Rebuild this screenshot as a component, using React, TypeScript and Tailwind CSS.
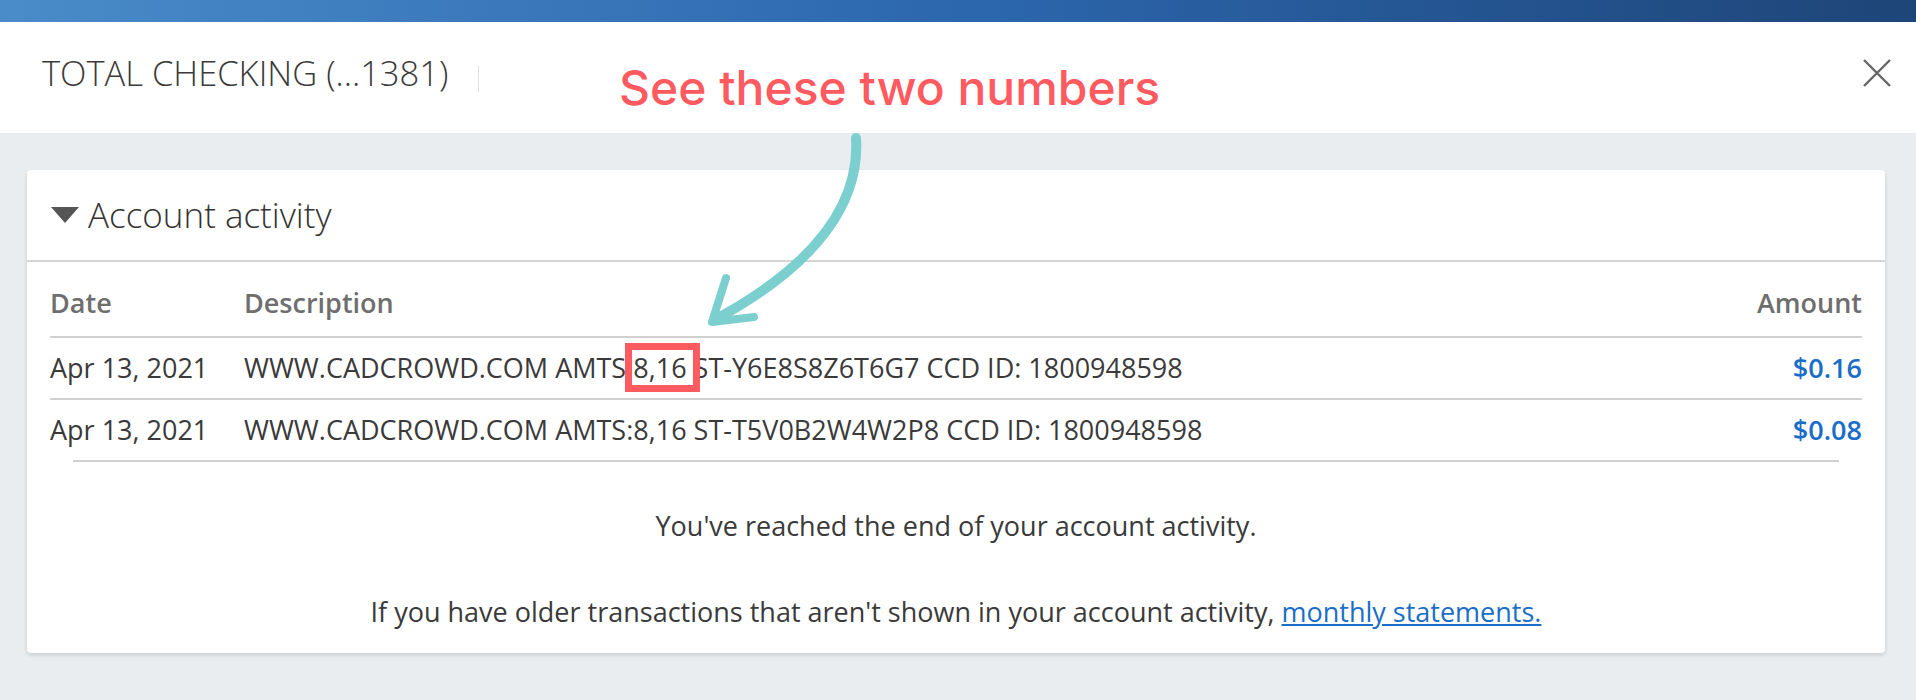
const rows = [
  { date: "Apr 13, 2021", code: "ST-Y6E8S8Z6T6G7", amount: "$0.16", marked: true },
  { date: "Apr 13, 2021", code: "ST-T5V0B2W4W2P8", amount: "$0.08", marked: false },
]

const CloseIcon = () => (
  <svg width="30" height="30" viewBox="0 0 30 30" className="mb-[10px]">
    <path d="M2 2 L28 28 M28 2 L2 28" stroke="#666" strokeWidth="2.4" />
  </svg>
)

const App = () => {
  return (
    <div className="relative min-h-[700px] w-full bg-[#e9edf0] font-['Open_Sans',sans-serif] text-[#3a3a3a]">
      <div className="h-[22px] bg-gradient-to-r from-[#4a8bc9] via-[#2c67ae] to-[#1e4578]"></div>

      <header className="flex h-[111px] items-center bg-white pl-[42px] pr-[24px]">
        <h1 className="mb-[9px] text-[34.5px] font-light leading-[40px] text-[#3a3a3a]">TOTAL CHECKING (...1381)</h1>
        <div className="ml-[30px] mt-[3px] h-[26px] w-px bg-[#e0e0e0]"></div>
        <button className="ml-auto">
          <CloseIcon />
        </button>
      </header>

      <main className="pt-[37px] pl-[27px] pr-[31px]">
        <section className="rounded-[4px] bg-white pb-[23px] shadow-[0_2px_4px_rgba(0,0,0,0.14)]">
          <div className="flex h-[92px] items-center border-b-2 border-[#d5d5d5] pl-[24px]">
            <svg width="28" height="16" viewBox="0 0 28 16">
              <polygon points="0,0 28,0 14,16" fill="#555" />
            </svg>
            <h2 className="ml-[9px] text-[35px] font-light leading-[40px] text-[#333]">Account activity</h2>
          </div>

          <div className="px-[23px] text-[27px] leading-[36px]">
            <div className="flex border-b-2 border-[#d0d0d0] pt-[23px] pb-[15px] font-semibold text-[#6e6e6e]">
              <div className="w-[194px]">Date</div>
              <div className="flex-1">Description</div>
              <div>Amount</div>
            </div>

            {rows.map((row, i) => (
              <div
                key={row.code}
                className={`flex py-[12px] ${i < rows.length - 1 ? "border-b-2 border-[#d0d0d0]" : ""}`}
              >
                <div className="w-[194px]">{row.date}</div>
                <div className="flex-1">
                  WWW.CADCROWD.COM AMTS
                  <span className="relative">
                    :8,16{" "}
                    {row.marked && (
                      <span className="absolute -top-[6px] -bottom-[6px] -left-[1px] w-[75px] border-[7px] border-[#ff5a5f]"></span>
                    )}
                  </span>
                  {row.code} CCD ID: 1800948598
                </div>
                <div className="font-semibold text-[#1a6ec8]">{row.amount}</div>
              </div>
            ))}

            <div className="mx-[23px] h-[2px] bg-[#d0d0d0]"></div>

            <p className="mt-[46px] text-center">You've reached the end of your account activity.</p>
            <p className="mt-[50px] text-center">
              If you have older transactions that aren't shown in your account activity,{" "}
              <a href="#" className="text-[#1a6ec8] underline">monthly statements.</a>
            </p>
          </div>
        </section>
      </main>

      {/* annotation */}
      <div className="pointer-events-none absolute left-[619px] top-[64px] font-['Inter',sans-serif] text-[48px] font-medium leading-none text-[#ff5a5f]">
        See these two numbers
      </div>
      <svg className="pointer-events-none absolute left-0 top-0" width="1916" height="700" viewBox="0 0 1916 700">
        <path d="M856 138 C860 200 820 262 718 318" fill="none" stroke="#7ccfcf" strokeWidth="10" strokeLinecap="round" />
        <path d="M726 278 L712 322 L754 317" fill="none" stroke="#7ccfcf" strokeWidth="8" strokeLinecap="round" strokeLinejoin="round" />
      </svg>
    </div>
  )
}

export default App
